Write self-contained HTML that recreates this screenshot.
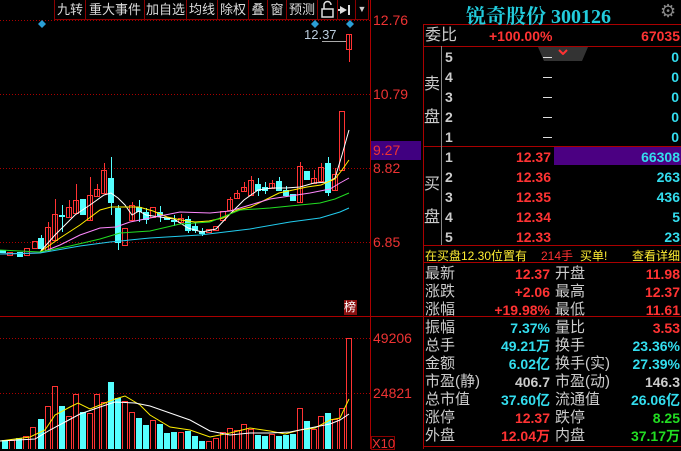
<!DOCTYPE html>
<html><head><meta charset="utf-8"><style>
*{margin:0;padding:0;box-sizing:border-box}
body{width:681px;height:449px;background:#000;overflow:hidden;position:relative;font-family:"Liberation Sans","Noto Sans CJK SC",sans-serif}
.a{position:absolute;white-space:nowrap}
.tb{position:absolute;top:0;height:20px;border:1px solid #8b0000;border-top:none;color:#ddd;font-size:13px;line-height:19px;text-align:center;white-space:nowrap;overflow:hidden}
.ax{position:absolute;color:#e33;font-size:14px;left:373px}
.r{font-weight:bold;font-size:14px;line-height:18px}
.red{color:#ff3333}.cy{color:#33ddee}.gr{color:#22dd22}.wh{color:#ccc}.ye{color:#ffee33}
.lb{color:#ccc;font-size:15px;line-height:18px}
.dash{position:absolute;left:543px;width:9px;height:1px;background:#ddd}
</style></head><body>
<svg id="s" width="681" height="449" style="position:absolute;left:0;top:0"></svg>

<div class="tb" style="left:54px;width:32px">九转</div>
<div class="tb" style="left:85px;width:60px">重大事件</div>
<div class="tb" style="left:144px;width:43px">加自选</div>
<div class="tb" style="left:186px;width:32px">均线</div>
<div class="tb" style="left:217px;width:32px">除权</div>
<div class="tb" style="left:248px;width:20px">叠</div>
<div class="tb" style="left:267px;width:20px">窗</div>
<div class="tb" style="left:286px;width:32px">预测</div>
<div class="tb" style="left:317px;width:21px"></div>
<div class="tb" style="left:337px;width:19px"></div>
<div class="tb" style="left:355px;width:14px;color:#ccc;font-size:9px">▼</div>

<div class="ax" style="top:12px">12.76</div>
<div class="ax" style="top:86px">10.79</div>
<div class="a" style="left:371px;top:141px;width:50px;height:19px;background:#400080"></div>
<div class="ax" style="top:142px">9.27</div>
<div class="ax" style="top:160px">8.82</div>
<div class="ax" style="top:234px">6.85</div>
<div class="ax" style="top:330px">49206</div>
<div class="ax" style="top:385px">24821</div>
<div class="a" style="left:371px;top:436px;width:24px;height:14px;border:1px solid #8b0000;color:#e33;font-size:13px;line-height:13px">X10</div>
<div class="a" style="left:344px;top:300px;width:13px;height:15px;background:#8b1010;color:#fff;font-size:12px;line-height:15px">榜</div>
<div class="a" style="left:304px;top:27px;color:#bcd;font-size:13px">12.37</div>

<div class="a" style="left:466px;top:0;color:#22ccdd;font-size:20px;font-weight:bold;font-family:'Liberation Serif','Noto Serif CJK SC',serif">锐奇股份 300126</div>
<div class="a" style="left:660px;top:1px;color:#888;font-size:18px">⚙</div>

<div class="a lb" style="left:425px;top:27px;font-size:16px">委比</div>
<div class="a r red" style="left:489px;top:27px">+100.00%</div>
<div class="a r red" style="right:1px;top:27px">67035</div>
<div class="a" style="left:538px;top:47px;width:50px;height:14px;background:#333;clip-path:polygon(0 0,100% 0,88% 100%,12% 100%)"></div>
<svg class="a" style="left:558px;top:49px" width="10" height="6"><polyline points="1,1 5,5 9,1" fill="none" stroke="#f33" stroke-width="2"/></svg>

<div class="a" style="left:424px;top:68px;line-height:33px;width:18px;color:#ccc;font-size:16px">卖<br>盘</div>
<div class="a" style="left:424px;top:168px;line-height:33px;width:18px;color:#ccc;font-size:16px">买<br>盘</div>
<div class="a" style="left:554px;top:147px;width:127px;height:18px;background:#4b0082"></div>
<div id="ob"></div>

<div class="a ye" style="left:425px;top:247px;font-size:12px">在买盘12.30位置有</div>
<div class="a red" style="left:541px;top:247px;font-size:12px">214手</div>
<div class="a ye" style="left:580px;top:247px;font-size:12px">买单!</div>
<div class="a ye" style="right:1px;top:247px;font-size:12px">查看详细</div>
<div id="st"></div>

<script>
const S=document.getElementById('s');let h='';
const L=(x1,y1,x2,y2,c,d)=>h+=`<line x1="${x1}" y1="${y1}" x2="${x2}" y2="${y2}" stroke="${c}" stroke-width="1" ${d?'stroke-dasharray="1,2"':''}/>`;
[20,94,168,242].forEach(y=>L(0,y+.5,370,y+.5,'#a00',1));
[338,393].forEach(y=>L(0,y+.5,370,y+.5,'#a00',1));
L(370.5,0,370.5,449,'#a00');L(0,316.5,681,316.5,'#a00');
L(423.5,24,423.5,449,'#a00');L(423,24.5,681,24.5,'#a00');
L(423,46.5,681,46.5,'#a00');L(423,146.5,681,146.5,'#a00');L(423,245.5,681,245.5,'#a00');L(423,262.5,681,262.5,'#a00');L(423,446.5,681,446.5,'#a00');
L(441.5,46,441.5,245,'#888');
[[42,24],[315,24],[350,24]].forEach(([x,y])=>h+=`<polygon points="${x},${y-4} ${x+4},${y} ${x},${y+4} ${x-4},${y}" fill="#2a9fd6"/>`);
const C=[[3,250,253,'c'],[10,252,255,'r'],[20,252,257,'c'],[27,248,255,'r'],[35,241,248,'r'],[41,238,249,'c',235,251],[48,227,250,'r',222],[55,214,240,'r',199],[62,215,217,'c',205,232],[69,207,217,'r',200],[76,200,213,'r',184],[83,199,215,'c'],[90,195,220,'r',177],[97,189,196,'r',184],[104,170,193,'r',163],[111,178,203,'c',157,215],[118,208,243,'c',205,250],[125,228,245,'r'],[132,205,220,'r',202],[139,207,212,'c',200,222],[146,212,220,'c',208,224],[153,207,217,'r'],[160,212,216,'c',206,222],[167,218,220,'c'],[174,220,222,'c',215,226],[181,218,222,'r',214],[188,219,231,'c',216,233],[195,226,231,'c',222,233],[202,231,234,'c',228,236],[209,229,232,'r'],[216,226,230,'r'],[223,211,220,'r'],[230,199,210,'r',197],[237,193,198,'r',190],[244,187,191,'r',182],[251,180,195,'r',176],[258,184,191,'c',178,196],[265,187,191,'c',182,194],[272,183,188,'r',180],[279,181,191,'c',177],[286,190,196,'c',186],[293,194,201,'c'],[300,166,202,'r',162],[307,171,180,'c'],[314,178,183,'r',170],[321,167,181,'r',163],[328,163,193,'c',157,196],[335,174,190,'r',168],[342,111,170,'r'],[349,34,49,'r',34,62]];
C.forEach(([x,t,b,c,wt,wb])=>{const col=c=='r'?'#ff3333':'#55ffff';if(wt||wb)L(x+.5,wt||t,x+.5,wb||b,col);
 if(c=='r')h+=`<rect x="${x-2.5}" y="${t+.5}" width="5" height="${Math.max(b-t,1)}" fill="none" stroke="${col}"/>`;else h+=`<rect x="${x-3}" y="${t}" width="6" height="${Math.max(b-t,1)}" fill="${col}"/>`;});
L(322,41.5,346,41.5,'#aaa');
const P=(pts,c)=>h+=`<polyline points="${pts}" fill="none" stroke="${c}" stroke-width="1"/>`;
P('40,252 55,235 75,215 90,205 104,195 111,193 118,198 125,205 132,215 139,211 146,215 160,217 174,219 188,228 202,232 216,229 230,214 244,200 258,190 272,188 286,188 300,187 314,183 328,182 335,178 342,155 349,130','#fff');
P('40,252 60,238 80,225 100,210 111,207 125,207 139,207 153,211 167,217 181,220 195,222 209,221 223,218 237,210 251,207 265,200 279,193 293,190 307,187 321,185 335,179 342,170 349,160','#ffee00');
P('0,254 40,253 60,245 80,235 100,228 116,227 130,222 150,218 180,212 210,213 230,211 250,205 270,199 290,196 310,193 330,189 340,183 349,178','#ff88ff');
P('0,250 40,252 70,246 100,239 120,233 150,231 180,224 210,222 240,210 270,208 300,205 320,203 335,199 349,193','#22dd22');
P('0,254 40,253 80,246 110,242 150,238 200,235 250,229 290,222 320,218 340,212 349,208','#22ccee');
const V=[[5,440,'c'],[12,440,'r'],[19,438,'c'],[26,436,'r'],[33,427,'r'],[41,419,'c'],[48,406,'r'],[55,386,'r'],[62,406,'c'],[69,416,'r'],[76,394,'r'],[83,412,'c'],[90,413,'r'],[97,394,'r'],[104,402,'r'],[111,382,'c'],[118,398,'c'],[125,401,'r'],[132,412,'r'],[139,418,'c'],[146,425,'c'],[153,420,'r'],[160,424,'c'],[167,433,'c'],[174,432,'c'],[181,432,'r'],[188,431,'c'],[195,436,'c'],[202,441,'c'],[209,441,'r'],[216,438,'r'],[223,432,'r'],[230,428,'r'],[237,430,'r'],[244,424,'r'],[251,429,'r'],[258,435,'c'],[265,436,'c'],[272,434,'r'],[279,436,'c'],[286,435,'c'],[293,434,'c'],[300,408,'r'],[307,421,'c'],[314,429,'r'],[321,416,'r'],[328,413,'c'],[335,419,'r'],[342,408,'r'],[349,338,'r']];
V.forEach(([x,t,c])=>{if(c=='r')h+=`<rect x="${x-2.5}" y="${t+.5}" width="5" height="${450-t}" fill="none" stroke="#ff3333"/>`;else h+=`<rect x="${x-3}" y="${t}" width="6" height="${450-t}" fill="#55ffff"/>`;});
P('0,441 30,437 45,430 55,415 70,407 78,403 90,409 100,405 115,399 125,396 140,405 150,415 170,427 190,430 210,437 230,433 250,428 270,431 285,434 300,430 315,428 330,420 340,418 349,399','#ffee00');
P('0,441 35,439 50,430 65,422 80,414 100,407 115,402 135,403 150,406 170,413 190,420 210,431 230,435 250,433 270,433 290,432 310,428 330,424 340,420 349,414','#fff');
h+=`<rect x="322" y="9" width="11" height="8" fill="none" stroke="#ddd" stroke-width="1.5"/><path d="M324,9 V5 a3.5,3.5 0 0 1 7,0" fill="none" stroke="#ddd" stroke-width="1.5"/>`;
h+=`<polygon points="340,6 347,10 340,14" fill="#ddd"/><rect x="348" y="5" width="2" height="10" fill="#ddd"/><rect x="338" y="9" width="3" height="2" fill="#ddd"/>`;
S.innerHTML=h;
let o='';
[5,4,3,2,1].forEach((n,i)=>{const y=48+i*20;o+=`<div class="a r wh" style="left:445px;top:${y}px">${n}</div><div class="dash" style="top:${y+9}px"></div><div class="a r cy" style="right:2px;top:${y}px">0</div>`;});
[['12.37','66308'],['12.36','263'],['12.35','436'],['12.34','5'],['12.33','23']].forEach(([p,v],i)=>{const y=148+i*20;o+=`<div class="a r wh" style="left:445px;top:${y}px">${i+1}</div><div class="a r red" style="right:130px;top:${y}px">${p}</div><div class="a r cy" style="right:1px;top:${y}px">${v}</div>`;});
document.getElementById('ob').innerHTML=o;
let s='';
const R=[['最新','12.37','red','开盘','11.98','red'],['涨跌','+2.06','red','最高','12.37','red'],['涨幅','+19.98%','red','最低','11.61','red'],['振幅','7.37%','cy','量比','3.53','red'],['总手','49.21万','cy','换手','23.36%','cy'],['金额','6.02亿','cy','换手(实)','27.39%','cy'],['市盈(静)','406.7','wh','市盈(动)','146.3','wh'],['总市值','37.60亿','cy','流通值','26.06亿','cy'],['涨停','12.37','red','跌停','8.25','gr'],['外盘','12.04万','red','内盘','37.17万','gr']];
R.forEach((r,i)=>{const y=265+i*18;s+=`<div class="a lb" style="left:425px;top:${y}px">${r[0]}</div><div class="a r ${r[2]}" style="right:131px;top:${y}px">${r[1]}</div><div class="a lb" style="left:555px;top:${y}px">${r[3]}</div><div class="a r ${r[5]}" style="right:1px;top:${y}px">${r[4]}</div>`;});
document.getElementById('st').innerHTML=s;
</script>
</body></html>
